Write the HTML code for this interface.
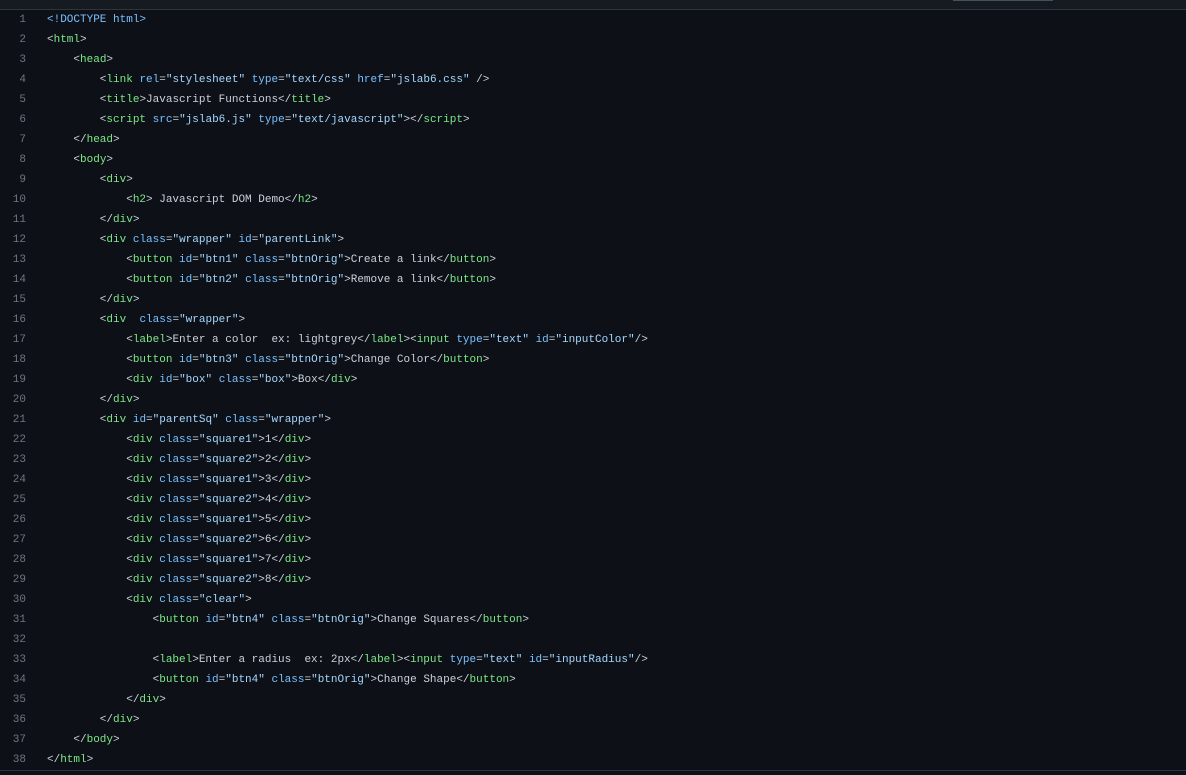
<!DOCTYPE html>
<html><head><style>
body{margin:0;background:#0d1117;width:1186px;height:775px;overflow:hidden;position:relative}
.top{position:absolute;left:0;top:0;width:1186px;height:9px;background:#161b22;border-bottom:1px solid #30363d}
.tab{position:absolute;left:953px;top:0;width:100px;height:1px;background:#484f58}
.bot{position:absolute;left:0;top:770px;width:1186px;height:1px;background:#30363d}
.code{position:absolute;left:0;top:10px;font-family:"Liberation Mono",monospace;font-size:11px;color:#c9d1d9}
.l{height:20px;line-height:20px;position:relative;white-space:pre}
.n{position:absolute;left:0;width:26px;text-align:right;color:#6e7681}
.c{position:absolute;left:47px;white-space:pre}
.t{color:#7ee787}.a{color:#79c0ff}.s{color:#a5d6ff}
</style></head><body>
<div class="top"></div><div class="tab"></div><div class="bot"></div>
<div class="code"><div class="l"><span class="n">1</span><span class="c"><span class="a">&lt;!DOCTYPE html&gt;</span></span></div><div class="l"><span class="n">2</span><span class="c">&lt;<span class="t">html</span>&gt;</span></div><div class="l"><span class="n">3</span><span class="c">    &lt;<span class="t">head</span>&gt;</span></div><div class="l"><span class="n">4</span><span class="c">        &lt;<span class="t">link</span> <span class="a">rel</span>=<span class="s">"stylesheet"</span> <span class="a">type</span>=<span class="s">"text/css"</span> <span class="a">href</span>=<span class="s">"jslab6.css"</span> /&gt;</span></div><div class="l"><span class="n">5</span><span class="c">        &lt;<span class="t">title</span>&gt;Javascript Functions&lt;/<span class="t">title</span>&gt;</span></div><div class="l"><span class="n">6</span><span class="c">        &lt;<span class="t">script</span> <span class="a">src</span>=<span class="s">"jslab6.js"</span> <span class="a">type</span>=<span class="s">"text/javascript"</span>&gt;&lt;/<span class="t">script</span>&gt;</span></div><div class="l"><span class="n">7</span><span class="c">    &lt;/<span class="t">head</span>&gt;</span></div><div class="l"><span class="n">8</span><span class="c">    &lt;<span class="t">body</span>&gt;</span></div><div class="l"><span class="n">9</span><span class="c">        &lt;<span class="t">div</span>&gt;</span></div><div class="l"><span class="n">10</span><span class="c">            &lt;<span class="t">h2</span>&gt; Javascript DOM Demo&lt;/<span class="t">h2</span>&gt;</span></div><div class="l"><span class="n">11</span><span class="c">        &lt;/<span class="t">div</span>&gt;</span></div><div class="l"><span class="n">12</span><span class="c">        &lt;<span class="t">div</span> <span class="a">class</span>=<span class="s">"wrapper"</span> <span class="a">id</span>=<span class="s">"parentLink"</span>&gt;</span></div><div class="l"><span class="n">13</span><span class="c">            &lt;<span class="t">button</span> <span class="a">id</span>=<span class="s">"btn1"</span> <span class="a">class</span>=<span class="s">"btnOrig"</span>&gt;Create a link&lt;/<span class="t">button</span>&gt;</span></div><div class="l"><span class="n">14</span><span class="c">            &lt;<span class="t">button</span> <span class="a">id</span>=<span class="s">"btn2"</span> <span class="a">class</span>=<span class="s">"btnOrig"</span>&gt;Remove a link&lt;/<span class="t">button</span>&gt;</span></div><div class="l"><span class="n">15</span><span class="c">        &lt;/<span class="t">div</span>&gt;</span></div><div class="l"><span class="n">16</span><span class="c">        &lt;<span class="t">div</span>  <span class="a">class</span>=<span class="s">"wrapper"</span>&gt;</span></div><div class="l"><span class="n">17</span><span class="c">            &lt;<span class="t">label</span>&gt;Enter a color  ex: lightgrey&lt;/<span class="t">label</span>&gt;&lt;<span class="t">input</span> <span class="a">type</span>=<span class="s">"text"</span> <span class="a">id</span>=<span class="s">"inputColor"</span>/&gt;</span></div><div class="l"><span class="n">18</span><span class="c">            &lt;<span class="t">button</span> <span class="a">id</span>=<span class="s">"btn3"</span> <span class="a">class</span>=<span class="s">"btnOrig"</span>&gt;Change Color&lt;/<span class="t">button</span>&gt;</span></div><div class="l"><span class="n">19</span><span class="c">            &lt;<span class="t">div</span> <span class="a">id</span>=<span class="s">"box"</span> <span class="a">class</span>=<span class="s">"box"</span>&gt;Box&lt;/<span class="t">div</span>&gt;</span></div><div class="l"><span class="n">20</span><span class="c">        &lt;/<span class="t">div</span>&gt;</span></div><div class="l"><span class="n">21</span><span class="c">        &lt;<span class="t">div</span> <span class="a">id</span>=<span class="s">"parentSq"</span> <span class="a">class</span>=<span class="s">"wrapper"</span>&gt;</span></div><div class="l"><span class="n">22</span><span class="c">            &lt;<span class="t">div</span> <span class="a">class</span>=<span class="s">"square1"</span>&gt;1&lt;/<span class="t">div</span>&gt;</span></div><div class="l"><span class="n">23</span><span class="c">            &lt;<span class="t">div</span> <span class="a">class</span>=<span class="s">"square2"</span>&gt;2&lt;/<span class="t">div</span>&gt;</span></div><div class="l"><span class="n">24</span><span class="c">            &lt;<span class="t">div</span> <span class="a">class</span>=<span class="s">"square1"</span>&gt;3&lt;/<span class="t">div</span>&gt;</span></div><div class="l"><span class="n">25</span><span class="c">            &lt;<span class="t">div</span> <span class="a">class</span>=<span class="s">"square2"</span>&gt;4&lt;/<span class="t">div</span>&gt;</span></div><div class="l"><span class="n">26</span><span class="c">            &lt;<span class="t">div</span> <span class="a">class</span>=<span class="s">"square1"</span>&gt;5&lt;/<span class="t">div</span>&gt;</span></div><div class="l"><span class="n">27</span><span class="c">            &lt;<span class="t">div</span> <span class="a">class</span>=<span class="s">"square2"</span>&gt;6&lt;/<span class="t">div</span>&gt;</span></div><div class="l"><span class="n">28</span><span class="c">            &lt;<span class="t">div</span> <span class="a">class</span>=<span class="s">"square1"</span>&gt;7&lt;/<span class="t">div</span>&gt;</span></div><div class="l"><span class="n">29</span><span class="c">            &lt;<span class="t">div</span> <span class="a">class</span>=<span class="s">"square2"</span>&gt;8&lt;/<span class="t">div</span>&gt;</span></div><div class="l"><span class="n">30</span><span class="c">            &lt;<span class="t">div</span> <span class="a">class</span>=<span class="s">"clear"</span>&gt;</span></div><div class="l"><span class="n">31</span><span class="c">                &lt;<span class="t">button</span> <span class="a">id</span>=<span class="s">"btn4"</span> <span class="a">class</span>=<span class="s">"btnOrig"</span>&gt;Change Squares&lt;/<span class="t">button</span>&gt;</span></div><div class="l"><span class="n">32</span><span class="c"> </span></div><div class="l"><span class="n">33</span><span class="c">                &lt;<span class="t">label</span>&gt;Enter a radius  ex: 2px&lt;/<span class="t">label</span>&gt;&lt;<span class="t">input</span> <span class="a">type</span>=<span class="s">"text"</span> <span class="a">id</span>=<span class="s">"inputRadius"</span>/&gt;</span></div><div class="l"><span class="n">34</span><span class="c">                &lt;<span class="t">button</span> <span class="a">id</span>=<span class="s">"btn4"</span> <span class="a">class</span>=<span class="s">"btnOrig"</span>&gt;Change Shape&lt;/<span class="t">button</span>&gt;</span></div><div class="l"><span class="n">35</span><span class="c">            &lt;/<span class="t">div</span>&gt;</span></div><div class="l"><span class="n">36</span><span class="c">        &lt;/<span class="t">div</span>&gt;</span></div><div class="l"><span class="n">37</span><span class="c">    &lt;/<span class="t">body</span>&gt;</span></div><div class="l"><span class="n">38</span><span class="c">&lt;/<span class="t">html</span>&gt;</span></div></div>
</body></html>
